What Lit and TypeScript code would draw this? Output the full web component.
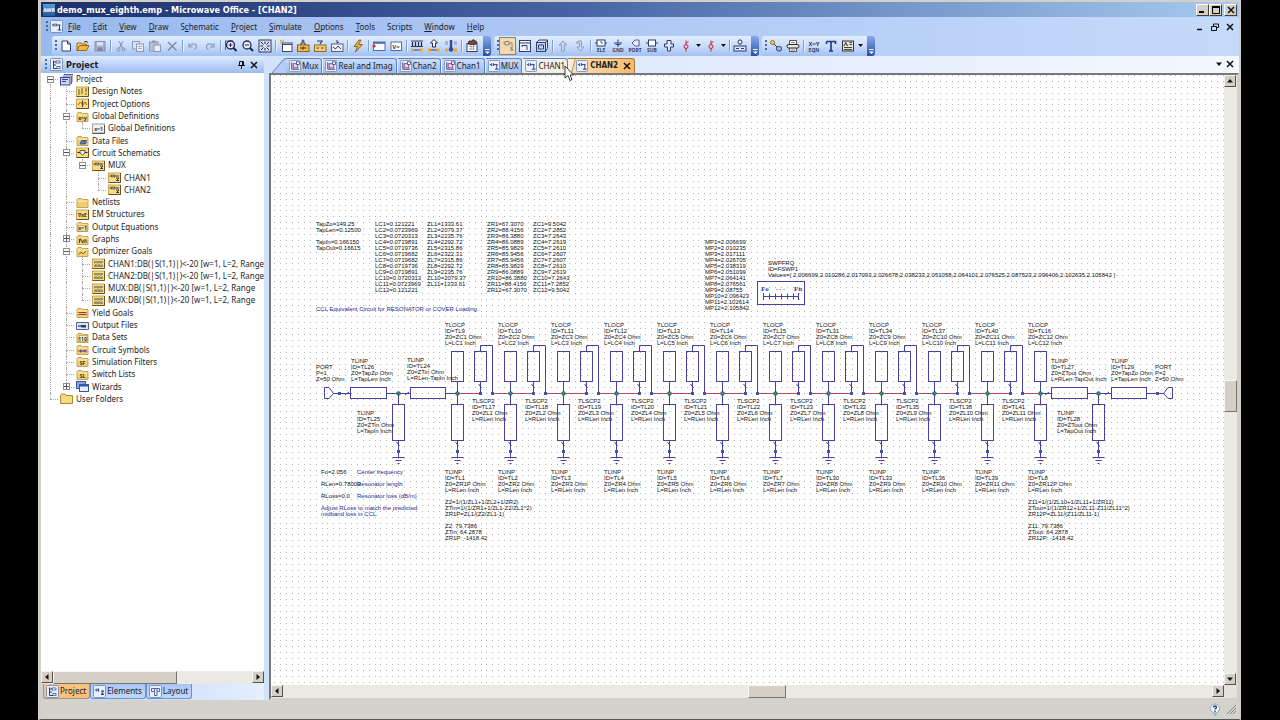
import { LitElement, html, svg, css, nothing } from "lit";
import { customElement, state } from "lit/decorators.js";
import { classMap } from "lit/directives/class-map.js";

/* ---------- icons ---------- */
const INK = "#2b3c78";
const folder = (inner: unknown) => svg`
  <path d="M1 3.5 L2 2.5 H5.5 L6.5 3.5 H12 V11.5 H1 Z" fill="#f3cf72" stroke="#b9923c" stroke-width=".8"/>
  <path d="M1.5 5 H11.5" stroke="#fff0b4"/>${inner}`;
const sheet = (inner: unknown) => svg`
  <rect x=".5" y="2" width="12" height="9.5" fill="#f7dc80" stroke="#b9923c" stroke-width=".8"/>
  <path d="M.5 11.5 H12.5 V2" fill="none" stroke="#6b5420"/>${inner}`;
const frame = (inner: unknown) => svg`
  <rect x=".5" y=".5" width="12" height="12" rx="1" fill="#e9f0fc" stroke="#7b93c4"/>${inner}`;
const tiny = (t: string, y = 10, fill = "#33332a") =>
  svg`<text x="6.5" y=${y} text-anchor="middle" font-size="5" font-weight="700" fill=${fill}>${t}</text>`;
const under = (t: string) => svg`<text x="7" y="14" text-anchor="middle" font-size="5" font-weight="700" fill="#33416e">${t}</text>`;

const ICONS: Record<string, unknown> = {
  /* tree */
  project: svg`<path d="M4 1.5 H13 V9.5 M2.5 3 H11.5 V11" fill="none" stroke="#5a629c"/><rect x=".5" y="4.5" width="9.500" height="7.500" fill="#c9d3f4" stroke="#3c4690"/><path d="M2 6.500 H8 M2 8.500 H6" stroke="#3c4690"/>`,
  notes: sheet(svg`<path d="M3 4 V10 M5 4 H7 M5 6 H7 M5 8 H7 M9 4 H11 M9 6 H11 M9 9 H11" stroke="#6a5a2a"/>`),
  options: sheet(svg`<path d="M2 8 L4.500 5 L7 8 L9 5 L11 8" fill="none" stroke="#c0501e"/><path d="M6.500 3.500 V10" stroke="#533"/>`),
  gdef: folder(tiny("x=y", 10)),
  eqn: svg`<rect x=".5" y="2" width="12" height="9" fill="#f2f2ec" stroke="#99a" /><path d="M.5 11.500 H12.500 V3" fill="none" stroke="#555"/>${tiny("x=1", 8.5)}`,
  data: folder(svg`<path d="M4 10 L5.500 6.500 H10.500 L9.500 10 Z" fill="#5b72b8" stroke="#2e3f86" stroke-width=".7"/>`),
  circuit: sheet(svg`<path d="M1.500 6.500 H4 M9 6.500 H11.500" stroke="#223"/><path d="M4 4.500 H9 V7 L6.500 9 L4 7 Z" fill="#fdf6c9" stroke="#334" stroke-width=".8"/>`),
  sch: sheet(svg`<path d="M1.500 5 H4 M4 3.500 V6.500 M6 3.500 V6.500 M6 5 H11 M8 7 H11 L8.500 9.500 H11" fill="none" stroke="#334"/>`),
  net: folder(nothing),
  em: sheet(tiny("∇xE", 8.5)),
  outeq: folder(svg`<rect x="2" y="5.500" width="9" height="5.500" fill="#fbe7a0" stroke="#884" stroke-width=".5"/>${tiny("x=1", 10)}`),
  graphs: folder(svg`<path d="M3.500 10 V6 H5 V8 H6.500 V10 M8 10 V7 H10 V10" fill="none" stroke="#54401a"/>`),
  goals: folder(svg`<path d="M3 9.500 L5 7 L7 9 L10 6" fill="none" stroke="#7d6120"/>`),
  goal: sheet(svg`<path d="M2 5 H11 M2 9 H11" stroke="#444"/><path d="M2.500 6.500 L4 8 L5.500 6.500 L7 8 L8.500 6.500 L10.500 8" fill="none" stroke="#776" stroke-width=".7"/>`),
  yield: folder(svg`<path d="M2.500 6.500 H10.500 M2.500 8.500 H10.500" stroke="#9b3a26"/>`),
  outf: svg`<path d="M.5 3.500 H12.500 V10.500 H.5 Z" fill="#dfe5f3" stroke="#51619a"/><path d="M2 7 H5" stroke="#223"/><rect x="5" y="6" width="5" height="2.500" fill="#2c3d84"/>`,
  dsets: folder(svg`<rect x="3" y="4.500" width="8" height="6" fill="#fff6c8" stroke="#b98a2c" stroke-width=".6"/>${tiny("110", 9.5)}`),
  sym: folder(svg`<path d="M2 8 H11" stroke="#a33030"/><path d="M4 6 L6.500 8 L4 10 Z M9.500 6 L7 8 L9.500 10 Z" fill="#4a58b0"/>`),
  simf: folder(tiny("SF", 10)),
  swl: folder(tiny("SL", 10)),
  wiz: svg`<rect x=".5" y="1.500" width="9" height="7" fill="#86a7e4" stroke="#3a559c"/><rect x="3.500" y="4.500" width="9" height="7" fill="#e9f0ff" stroke="#3a559c"/><rect x="3.500" y="4.500" width="9" height="2" fill="#2f57b8"/>`,
  users: svg`<path d="M.5 3.500 L1.500 2 H5 L6 3.500 H12.500 V11.500 H.5 Z" fill="#f5db7b" stroke="#a98a34"/>`,
  /* tabs */
  graph: frame(svg`<path d="M3 2.500 V10 H11" fill="none" stroke="${INK}"/><rect x="4.500" y="4" width="5" height="4.500" fill="#f1d3ea" stroke="#8a3f86"/><rect x="8" y="2" width="3.500" height="3" fill="#fff" stroke="${INK}" stroke-width=".8"/>`),
  schem: frame(svg`<path d="M2 5 H4 M4 3.500 V6.500 M6 3.500 V6.500 M6 5 H10.500 M9.500 5 V10 M7.500 10 H11.500" fill="none" stroke="${INK}"/>`),
  pane: frame(svg`<path d="M3.500 2.500 V10.500 H7 M3.500 4 H6 M3.500 7 H6" fill="none" stroke="${INK}"/><rect x="6" y="3" width="4" height="2" fill="#fff" stroke="${INK}" stroke-width=".7"/><rect x="7" y="8.500" width="3" height="2" fill="#fff" stroke="${INK}" stroke-width=".7"/>`),
  elems: frame(svg`<path d="M2 5 H4 M4 3.500 V6.500 M5.500 3.500 V6.500 M8 6 H11 L8.500 8 L11 9.500 H8" fill="none" stroke="${INK}"/>`),
  layout: frame(svg`<path d="M2.500 3.500 H10.500 V6.500 H8 V10.500 H5.500 V6.500 H2.500 Z M5.500 3.500 V6.500 M8 3.500 V6.500" fill="none" stroke="#55669c"/>`),
  /* toolbar, 14x16 */
  new: svg`<path d="M3 3 H8.500 L11.500 6 V13 H3 Z" fill="#fff" stroke="#33406e"/><path d="M8.500 3 V6 H11.500" fill="none" stroke="#33406e"/>`,
  open: svg`<path d="M1 12.500 V5 H5 L6 6 H10.500 V7.500" fill="#f4d06a" stroke="#8d6a20"/><path d="M1 12.500 L3.500 7.500 H13 L10.500 12.500 Z" fill="#f7b440" stroke="#8d6a20"/><path d="M8 4 Q10 2.500 12 4.500" fill="none" stroke="#334"/>`,
  save: svg`<rect x="2" y="3.500" width="10" height="9.500" fill="#a7b2c9" stroke="#8290ae"/><rect x="4" y="4" width="6" height="3.500" fill="#dbe3f2"/><rect x="4.500" y="9.500" width="5" height="3.500" fill="#7f8ba6"/>`,
  cut: svg`<path d="M5 3 L8.500 10 M9 3 L5.500 10" stroke="#7f8ca8"/><circle cx="4.500" cy="11.500" r="1.500" fill="none" stroke="#7f8ca8"/><circle cx="9.500" cy="11.500" r="1.500" fill="none" stroke="#7f8ca8"/>`,
  copy: svg`<rect x="1.500" y="3.500" width="7" height="7.500" fill="#dde6f6" stroke="#8c99b4"/><rect x="5.500" y="6" width="7" height="7.500" fill="#e7eefa" stroke="#8c99b4"/><path d="M7 8.500 H11 M7 10.500 H11" stroke="#a4b0c8"/>`,
  paste: svg`<rect x="1.500" y="4" width="8.500" height="9" fill="#b6c1d8" stroke="#8c99b4"/><rect x="4" y="2.500" width="3.500" height="2.500" fill="#8c99b4"/><rect x="6" y="7" width="6.500" height="6.500" fill="#e7eefa" stroke="#8c99b4"/>`,
  del: svg`<path d="M3 4 L11.500 12.500 M11.500 4 L3 12.500" stroke="#7c88a3" stroke-width="1.400"/>`,
  undo: svg`<path d="M3 5 V9 H7 M3 9 Q6 4.500 9.500 6.500 Q12 9 8.500 11.500" fill="none" stroke="#8c99b8" stroke-width="1.200"/>`,
  redo: svg`<path d="M11 5 V9 H7 M11 9 Q8 4.500 4.500 6.500 Q2 9 5.500 11.500" fill="none" stroke="#8c99b8" stroke-width="1.200"/>`,
  zin: svg`<path d="M1 3 H9 M1.500 3 V12" stroke="#33406e" stroke-width=".8"/><circle cx="6.500" cy="7" r="4" fill="#e5eefc" stroke="#222b55" stroke-width="1.400"/><path d="M4.500 7 H8.500 M6.500 5 V9" stroke="#222b55"/><path d="M9.500 10 L12.500 13" stroke="#1b2242" stroke-width="2"/>`,
  zout: svg`<circle cx="6" cy="7" r="4" fill="#e5eefc" stroke="#222b55" stroke-width="1.300"/><path d="M4 7 H8" stroke="#222b55"/><path d="M9 10 L12 13" stroke="#1b2242" stroke-width="2"/>`,
  fit: svg`<rect x="1" y="2" width="12" height="12" fill="#d5dff2" stroke="#333c5c"/><path d="M3 4 L5.500 6.500 M11 4 L8.500 6.500 M3 12 L5.500 9.500 M11 12 L8.500 9.500 M7 3.500 V6 M7 10 V12.500 M2.500 8 H5 M9 8 H11.500" stroke="#222b4c"/>`,
  nwin: svg`<rect x="3.500" y="5" width="9.500" height="8.500" fill="#fff" stroke="#3a4468"/><path d="M3.500 6.500 H13" stroke="#3a4468"/><path d="M1 2 L4 5 M4 1.500 V4 M1 5 H3" stroke="#c8961e"/>`,
  add1: svg`<rect x="1.500" y="7" width="11.500" height="6.500" fill="#f0bd58" stroke="#8d5a20"/><path d="M5 7 V5 H9 V7 M4 10 H10.500 M7 8.500 V12" fill="none" stroke="#4b3316"/><path d="M7 1.500 V4.500 M5.500 3 H8.500" stroke="#333"/>`,
  add2: svg`<rect x="1.500" y="7" width="11.500" height="6.500" fill="#f5cf70" stroke="#8d6a20"/><path d="M4 3 H9 L7 6 M3.500 10 H6 M8 10 H10.500" fill="none" stroke="#333a5c" stroke-width="1.200"/>`,
  add3: svg`<rect x="1.500" y="6" width="11.500" height="7.500" fill="#eef2fb" stroke="#55608c"/><path d="M3 9 L5.500 11 L8 8 L11 11 M7 2 V5 L9 4" fill="none" stroke="#333a5c"/>`,
  bolt: svg`<path d="M8 2 L3 8.500 H6.500 L4.500 14 L11.500 6.500 H7.500 L10 2 Z" fill="#f5b62c" stroke="#6e4c10" stroke-width=".8"/>`,
  win: svg`<rect x="1.500" y="4" width="11.500" height="8.500" fill="#f6f9ff" stroke="#4d6cae"/><rect x="1.500" y="4" width="11.500" height="1.800" fill="#4d6cae"/><path d="M0 8 H4 M2.500 6.500 V9.500" stroke="#c33"/>`,
  ve: svg`<rect x="2" y="4" width="10.500" height="8.500" fill="#fff" stroke="#4d6cae"/><text x="7" y="11" text-anchor="middle" font-size="6" font-weight="700" fill="#333">V=</text>`,
  bits: svg`<path d="M1 3 H13 M1 8.500 H13" stroke="#2d3a66"/><path d="M2.500 4 V8 M5.500 4 V8 M8.500 4 V8 M11.500 4 V8" stroke="#222b4c" stroke-width="1.200"/><path d="M2 12 H12" stroke="#33478c"/><rect x="1" y="10.500" width="3" height="3" fill="#f0a828"/><rect x="9.500" y="10.500" width="3" height="3" fill="#f0a828"/>`,
  up2: svg`<path d="M7 1.500 L10.500 5 H8.500 V9 H5.500 V5 H3.500 Z" fill="#fff" stroke="#222b4c"/><path d="M2 12 H12" stroke="#33478c"/><rect x="1" y="10.500" width="3" height="3" fill="#f0a828"/><rect x="9.500" y="10.500" width="3" height="3" fill="#f0a828"/>`,
  therm: svg`<path d="M7 2 V10" stroke="#344a9c" stroke-width="2.500"/><circle cx="7" cy="11.500" r="2.300" fill="#344a9c"/><path d="M1 4 H4 M1 6 H4 M10 4 H13 M10 6 H13" stroke="#7a84a4"/><rect x="10" y="10.500" width="3" height="3" fill="#f0a828"/><rect x="1" y="10.500" width="3" height="3" fill="#f0a828"/>`,
  tune: svg`<rect x="2" y="5.500" width="10" height="8" fill="#fff" stroke="#333c5c"/><path d="M3 6 L4 3 H7 L8 1.500 L12 4 L10.500 6.500 H6 Z" fill="#8a4326" stroke="#222" stroke-width=".8"/><path d="M4 8.500 H10 M4 11 H10 M6 7 V12 M8.500 7 V12" stroke="#848eb0" stroke-width=".7"/>`,
  vs: svg`<path d="M2 5 H4 M4 3.500 V7 H8 V3.500 Z M8 5 H11 V12 M9 12 H12.500 M9.500 9 L11 12" fill="none" stroke="#8d8672"/>`,
  vl: svg`<rect x="1.500" y="2.500" width="11" height="11" fill="#eef3ff" stroke="#33406e"/><path d="M1.500 5 H12.500 M4 7.500 H9 V12 M4 7.500 V9" fill="none" stroke="#33406e"/>`,
  v3: svg`<path d="M1.500 4.500 L4 2 H12.500 V10.500 L10 13.500" fill="#dfe8fb" stroke="#33406e"/><path d="M10.500 4.500 L12.500 2" stroke="#33406e"/><rect x="1.500" y="4.500" width="9" height="9" fill="#c3d0f0" stroke="#33406e"/><path d="M3.500 7 H8.500 V11 H3.500 Z" fill="none" stroke="#33406e"/>`,
  hup: svg`<path d="M7 3 L11 7 H8.500 V13 H5.500 V7 H3 Z" fill="#c9d6ee" stroke="#8f9dbf"/>`,
  hdn: svg`<path d="M5 3 H8.500 V9 H11 L7.500 13 L4 9 H6.500 V5 H3 Z" fill="#c9d6ee" stroke="#8f9dbf"/>`,
  ele: svg`<path d="M1 5 H3 M11 5 H13" stroke="${INK}"/><rect x="3" y="2" width="8" height="6" fill="#fff" stroke="${INK}"/><path d="M6 4 H8 V6" fill="none" stroke="${INK}" stroke-width=".8"/>${under("ELE")}`,
  gnd: svg`<path d="M7 1.500 V5 M3 5 H11 M4.500 6.500 H9.500 M6 8 H8" stroke="${INK}"/>${under("GND")}`,
  port: svg`<path d="M11 2 V8 H7 L4 5 L7 2 Z" fill="#e8effc" stroke="${INK}" stroke-width=".8"/>${under("PORT")}`,
  sub: svg`<path d="M1 5 H3.500 M10.500 5 H13" stroke="${INK}"/><rect x="3.500" y="2" width="7" height="6" fill="#fff" stroke="${INK}"/>${under("SUB")}`,
  probe: svg`<path d="M5 2.500 H9 V6 H11.500 V9 H8.500 V13 H5.500 V9 H2.500 V6 H5 Z" fill="#dfe8fb" stroke="${INK}"/>`,
  m1: svg`<path d="M7 2.500 V13.500 M7 5 L9.500 3.500" stroke="#c0263a"/><circle cx="7" cy="8.500" r="2" fill="#e7c6d8" stroke="#c0263a"/>`,
  vars: svg`<path d="M7 1.500 V7" stroke="${INK}"/><circle cx="7" cy="4" r="2" fill="#fff" stroke="${INK}"/><rect x="1" y="8" width="12" height="5" fill="#dce6fb" stroke="${INK}"/><path d="M3 10.500 H6 M8 10.500 H11" stroke="${INK}"/>`,
  link: svg`<circle cx="3.500" cy="4.500" r="2" fill="#f5cf60" stroke="#8d6a20"/><path d="M5 6 L9 10" stroke="#333"/><rect x="7.500" y="8.500" width="5" height="4.500" rx="2" fill="#9fb6ea" stroke="${INK}"/>`,
  print: svg`<path d="M3.500 7 V2.500 H10.500 V7" fill="#fff" stroke="#555"/><path d="M3.500 9 V13.500 H10.500 V9" fill="#eee" stroke="#555"/><rect x="1" y="6.500" width="12" height="3.500" rx="1.700" fill="#e8e8ea" stroke="#222"/><path d="M5 4.500 H9 M5 12 H9" stroke="#889"/>`,
  xy: svg`<text x="7" y="7.500" text-anchor="middle" font-size="6" font-weight="700" fill="#3c4454">X=Y</text><text x="7" y="13.500" text-anchor="middle" font-size="5" font-weight="700" fill="#3c4454">EQN</text>`,
  txt: svg`<path d="M2.500 3.500 H11.500 V6 M2.500 6 V3.500 M7 3.500 V13 M5 13 H9" fill="none" stroke="#20397f" stroke-width="1.600"/>`,
  pic: svg`<rect x="1.500" y="3" width="11" height="10" fill="#e8e4d6" stroke="#333"/><path d="M3 9.500 H11 M3 11.500 H11 M8.500 4.500 H11 M8.500 6.500 H11" stroke="#444"/><path d="M3 8 L4.800 4.500 L6.500 8" fill="none" stroke="#222"/>`,
};
const icon = (name: string, w = 13, h = 13) =>
  html`<svg class="ic" width=${w} height=${h} viewBox="0 0 ${w} ${h}" aria-hidden="true">${ICONS[name]}</svg>`;
const tabIcon = (name: string) =>
  html`<svg class="ic" width="12" height="12" viewBox="0 0 13 13" aria-hidden="true">${ICONS[name]}</svg>`;

/* ---------- schematic sheet ---------- */
const LINE = 6;
const label = (x: number, y: number, lines: string[], cls = "") =>
  svg`${lines.map((t, i) => svg`<text class="lb ${cls}" x=${x} y=${y + 2 + i * LINE}>${t}</text>`)}`;

const series = (p: string, v: string[]) => v.map((s, i) => `${p}${i + 1}=${s}`);
const LC = series("LC", ["0.121221", "0.0723969", "0.0720313", "0.0719891", "0.0719736", "0.0719682", "0.0719682", "0.0719736", "0.0719891", "0.0720313", "0.0723969", "0.121221"]);
const ZL = series("ZL", ["1333.61", "2079.37", "2235.76", "2292.72", "2315.86", "2322.31", "2315.86", "2292.72", "2235.76", "2079.37", "1333.61"]);
const ZR = series("ZR", ["67.3070", "88.4156", "86.3880", "86.0889", "85.9829", "85.9456", "85.9456", "85.9829", "86.0889", "86.3880", "88.4156", "67.3070"]);
const ZC = series("ZC", ["9.5042", "7.2852", "7.2643", "7.2619", "7.2610", "7.2607", "7.2607", "7.2610", "7.2619", "7.2643", "7.2852", "9.5042"]);
const MP = series("MP", ["2.006699", "2.010235", "2.017111", "2.026705", "2.038319", "2.051099", "2.064141", "2.076561", "2.08755", "2.096423", "2.102614", "2.105842"]);
const TOP_ID = [9, 10, 11, 12, 13, 14, 15, 31, 34, 37, 40, 16];
const MID_ID = [17, 18, 19, 20, 21, 22, 23, 32, 35, 38, 41];
const LOW_ID = [1, 2, 3, 4, 5, 6, 7, 30, 33, 36, 39, 8];
const AXIS = 393.5;

const joint = (x: number) => svg`<circle class="joint" cx=${x} cy=${AXIS} r="1.8"/>`;
const pin = (x: number, y: number) => svg`<rect class="pin" x=${x - 1.5} y=${y - 1.5} width="3" height="3"/>`;
const stub = (x: number) => svg`
  <path class="wire" d="M${x} ${AXIS} V404.5 M${x} 440.500 V457.500 M${x - 2} 442 L${x + 1} 446 M${x - 6} 457.500 H${x + 6} M${x - 3} 460.500 H${x + 3}"/>
  <path class="wire" d="M${x - 1} 463.500 H${x + 1}"/>
  <rect class="wire" x=${x - 6} y="404.500" width="12" height="36"/>${pin(x, 451.5)}`;
const column = (i: number) => {
  const x = 457.5 + 53 * i;
  const lx = 445 + 53 * i;
  const z = i === 0 ? "ZR1P" : i === 11 ? "ZR12P" : `ZR${i + 1}`;
  return svg`
    <rect class="wire" x=${x - 6} y="351.5" width="12" height="30"/>
    <path class="wire" d="M${x} 381.5 V${AXIS}"/>
    ${i < 11 ? svg`
      <path class="red" d="M${x} ${AXIS} h23 M${x + 35} ${AXIS} h18"/>
      <rect class="wire" x=${x + 17} y="351.5" width="12" height="30"/>
      <path class="wire" d="M${x + 23} 351.5 V345.500 H${x + 35} V${AXIS} M${x + 23} 381.500 V${AXIS} M${x + 21} 384 l3 4"/>
      ${pin(x + 23, AXIS)}${pin(x + 35, AXIS)}
      ${label(lx + 27, 401, ["TLSCP2", `ID=TL${MID_ID[i]}`, `Z0=ZL${i + 1} Ohm`, "L=RLen Inch"])}` : nothing}
    ${stub(x)}${joint(x)}
    ${label(lx, 325, ["TLOCP", `ID=TL${TOP_ID[i]}`, `Z0=ZC${i + 1} Ohm`, `L=LC${i + 1} Inch`])}
    ${label(lx, 472, ["TLINP", `ID=TL${LOW_ID[i]}`, `Z0=${z} Ohm`, "L=RLen Inch"])}`;
};

@customElement("schematic-sheet")
export class SchematicSheet extends LitElement {
  static styles = css`
    :host { display: block; min-width: 0; overflow: hidden; background: #fff; }
    .sheet { display: block; width: 100%; height: 100%; }
    .lb { font: 6px "Liberation Sans", Arial, sans-serif; fill: #111114; white-space: pre; }
    .blue { fill: #282886; }
    .wire { fill: none; stroke: #4640a0; stroke-width: 1; }
    .red { fill: none; stroke: #b8485c; stroke-width: 1; }
    .joint { fill: #2d9484; stroke: #24605e; stroke-width: 1; }
    .pin { fill: #3c56b4; }
    .fn { font: 700 7px "Liberation Serif", serif; fill: #3c389c; }
  `;
  render() {
    const dots = [];
    for (let r = 0; r < 9; r++)
      for (let c = 0; c < 9; c++)
        dots.push(svg`<rect x=${Math.round((c * 53) / 9)} y=${Math.round((r * 53) / 9)} width="1" height="1"/>`);
    return html`<svg class="sheet" role="img" aria-label="CHAN2 schematic">
      <defs><pattern id="grid" x="27" y="0" width="53" height="53" patternUnits="userSpaceOnUse"><g fill="#b4b4b4">${dots}</g></pattern></defs>
      <rect width="100%" height="100%" fill="url(#grid)"/>
      <g transform="translate(-271 -75)">
        ${label(316, 224, ["TapZo=149.25", "TapLen=0.12500", "", "TapIn=0.166150", "TapOut=0.16615"])}
        ${label(375, 224, LC)}${label(427, 224, ZL)}${label(487, 224, ZR)}${label(533, 224, ZC)}${label(705, 242, MP)}
        ${label(316, 309, ["CCL Equivalent Circuit for RESONATOR or COVER Loading."], "blue")}
        ${label(768, 263, ["SWPFRQ", "ID=FSWP1", "Values={ 2.006699,2.010286,2.017093,2.026678,2.038233,2.051058,2.064101,2.076525,2.087523,2.096406,2.102635,2.105842 }"])}
        <rect class="wire" x="757.5" y="281.5" width="47" height="23"/>
        <path class="wire" d="M763 296.500 H799 M763.500 293 V300 M769.500 294 V299 M775.500 294 V299 M781.500 294 V299 M787.500 294 V299 M793.500 294 V299 M798.500 293 V300"/>
        <text class="fn" x="761" y="291">Fo</text><text class="fn" x="776" y="290">. . .</text><text class="fn" x="794" y="291">Fn</text>

        <path class="wire" d="M324.5 387.5 H329 L333.500 393.500 L329 398.500 H324.500 Z M333.500 ${AXIS} H350.500 M386.500 ${AXIS} H410.500 M445.500 ${AXIS} H457.500 M345 395 L349 392 M405 395 L409 392"/>
        <rect class="wire" x="350.5" y="387.5" width="36" height="11"/><rect class="wire" x="410.500" y="387.500" width="35" height="11"/>
        <path class="wire" d="M1172.5 387.500 H1168 L1163.500 393.500 L1168 398.500 H1172.500 Z M1163.500 ${AXIS} H1146.500 M1111.500 ${AXIS} H1087.500 M1040.500 ${AXIS} H1051.500 M1045 395 L1049 392 M1105 395 L1109 392"/>
        <rect class="wire" x="1051.5" y="387.5" width="36" height="11"/><rect class="wire" x="1111.500" y="387.500" width="35" height="11"/>
        ${pin(339.5, AXIS)}${pin(1157.5, AXIS)}
        ${stub(398.5)}${joint(398.5)}${stub(1098.5)}${joint(1098.5)}
        ${TOP_ID.map((_, i) => column(i))}

        ${label(316, 367, ["PORT", "P=1", "Z=50 Ohm"])}
        ${label(351, 361, ["TLINP", "ID=TL26", "Z0=TapZo Ohm", "L=TapLen Inch"])}
        ${label(407, 360, ["TLINP", "ID=TL24", "Z0=ZTin Ohm", "L=RLen-TapIn Inch"])}
        ${label(357, 413, ["TLINP", "ID=TL25", "Z0=ZTin Ohm", "L=TapIn Inch"])}
        ${label(1051, 361, ["TLINP", "ID=TL27", "Z0=ZTout Ohm", "L=RLen-TapOut Inch"])}
        ${label(1111, 361, ["TLINP", "ID=TL29", "Z0=TapZo Ohm", "L=TapLen Inch"])}
        ${label(1057, 413, ["TLINP", "ID=TL28", "Z0=ZTout Ohm", "L=TapOut Inch"])}
        ${label(1155, 367, ["PORT", "P=2", "Z=50 Ohm"])}

        ${label(321, 472, ["Fo=2.056", "", "RLen=0.78000", "", "RLoss=0.0"])}
        ${label(357, 472, ["Center frequency", "", "Resonator length", "", "Resonator loss (dB/m)"], "blue")}
        ${label(321, 508, ["Adjust RLoss to match the predicted", "midband loss in CCL."], "blue")}
        ${label(445, 502, ["Z2=1/(1/ZL1+1/ZL2+1/ZR2)", "ZTin=1/(1/ZR1+1/ZL1-Z2/ZL1^2)", "ZR1P=ZL1/(Z2/ZL1-1)", "", "Z2: 79.7386", "ZTin: 64.2878", "ZR1P: -1418.42"])}
        ${label(1028, 502, ["Z11=1/(1/ZL10+1/ZL11+1/ZR11)", "ZTout=1/(1/ZR12+1/ZL11-Z11/ZL11^2)", "ZR12P=ZL11/(Z11/ZL11-1)", "", "Z11: 79.7386", "ZTout: 64.2878", "ZR12P: -1418.42"])}
      </g>
    </svg>`;
  }
}

/* ---------- data ---------- */
type Node = [level: number, icon: string, text: string, box?: "+" | "-"];
const TREE: Node[] = [
  [0, "project", "Project", "-"],
  [1, "notes", "Design Notes"],
  [1, "options", "Project Options"],
  [1, "gdef", "Global Definitions", "-"],
  [2, "eqn", "Global Definitions"],
  [1, "data", "Data Files"],
  [1, "circuit", "Circuit Schematics", "-"],
  [2, "sch", "MUX", "-"],
  [3, "sch", "CHAN1"],
  [3, "sch", "CHAN2"],
  [1, "net", "Netlists"],
  [1, "em", "EM Structures"],
  [1, "outeq", "Output Equations"],
  [1, "graphs", "Graphs", "+"],
  [1, "goals", "Optimizer Goals", "-"],
  [2, "goal", "CHAN1:DB(|S(1,1)|)<-20 [w=1, L=2, Range"],
  [2, "goal", "CHAN2:DB(|S(1,1)|)<-20 [w=1, L=2, Range"],
  [2, "goal", "MUX:DB(|S(1,1)|)<-20 [w=1, L=2, Range"],
  [2, "goal", "MUX:DB(|S(1,1)|)<-20 [w=1, L=2, Range"],
  [1, "yield", "Yield Goals"],
  [1, "outf", "Output Files"],
  [1, "dsets", "Data Sets"],
  [1, "sym", "Circuit Symbols"],
  [1, "simf", "Simulation Filters"],
  [1, "swl", "Switch Lists"],
  [1, "wiz", "Wizards", "+"],
  [0, "users", "User Folders"],
];
const hasNext = (i: number, level: number) => {
  for (let k = i + 1; k < TREE.length; k++) {
    if (TREE[k][0] < level) return false;
    if (TREE[k][0] === level) return true;
  }
  return false;
};
const MENUS = ["_File", "_Edit", "_View", "_Draw", "S_chematic", "_Project", "_Simulate", "_Options", "_Tools", "Scripts", "_Window", "_Help"];
const BARS = [
  "new open save | cut copy paste del | undo redo | zin zout fit | nwin add1 add2 add3 | bolt | win ve | bits up2 therm | tune",
  "vs vl v3 | hup hdn | ele gnd port sub probe m1 > m1 > | vars",
  "link print | xy txt pic >",
];
const TABS: [string, string][] = [["graph", "Mux"], ["graph", "Real and Imag"], ["graph", "Chan2"], ["graph", "Chan1"], ["schem", "MUX"], ["schem", "CHAN1"], ["schem", "CHAN2"]];
const cross = html`<svg class="ic" width="8" height="8" viewBox="0 0 8 8"><path d="M1 1 L7 7 M7 1 L1 7" stroke="#111" stroke-width="1.500"/></svg>`;
const tri = (d: string) => html`<svg class="ic" width="8" height="8" viewBox="0 0 8 8"><path d=${d} fill="#111"/></svg>`;
const UP = "M1 5.500 L4 2 L7 5.500 Z", DOWN = "M1 2.500 L4 6 L7 2.500 Z", LEFT = "M5.500 1 L2 4 L5.500 7 Z", RIGHT = "M2.500 1 L6 4 L2.500 7 Z";

@customElement("app-root")
export class AppRoot extends LitElement {
  @state() private active = 6;

  static styles = css`
    :host { display: block; background: #000; height: 100vh; overflow: hidden; font: 8px/12px "Noto Sans", Tahoma, sans-serif; color: #1d1d22; }
    * { box-sizing: border-box; }
    button { font: inherit; color: inherit; background: none; border: 0; padding: 0; margin: 0; }
    .ic { display: block; flex: none; }
    .window { position: relative; height: 100%; margin: 0 39px 0 38px; display: grid; grid-template-rows: 15px 19px 20px minmax(0, 1fr) 19px; border: 2px solid #d4d0c8; border-bottom: 1px solid #555; border-left-width: 3px;
      background: linear-gradient(90deg, #9ab9ee, #c6dafb); }
    .title { display: flex; align-items: center; gap: 2px; padding: 0 2px 0 2px; color: #fff; font: 700 9px/14px "DejaVu Sans Condensed", Tahoma, sans-serif; background: linear-gradient(90deg, #1a2f6b, #4765a6 45%, #a6cbf0); }
    .title h1 { font: inherit; margin: 0; flex: 1; white-space: nowrap; }
    .logo { width: 12px; height: 12px; background: linear-gradient(#5aa0d4, #1c5a98); font-size: 5px; line-height: 12px; text-align: center; }
    .wbtn { width: 13px; height: 12px; display: grid; place-items: center; background: #d4d0c8; border: 1px solid; border-color: #fff #404040 #404040 #fff; }
    .winbtns { display: flex; }
    .winbtns .last { margin-left: 2px; }
    .menu { display: flex; align-items: center; padding-left: 5px; }
    .grip { width: 2px; height: 12px; flex: none; background: repeating-linear-gradient(#4a66a8 0 2px, transparent 2px 4px); }
    .menu .ic { margin: 0 0 0 2px; }
    .menu nav { display: flex; gap: 12px; flex: 1; padding-left: 5px; }
    .mdi { display: flex; gap: 5px; padding-right: 5px; }
    .bars { display: flex; gap: 3px; padding-left: 11px; }
    .bar { display: flex; align-items: center; height: 20px; padding-left: 3px; background: linear-gradient(#e2edff, #c9dcfb 50%, #a3c0f0); border-radius: 3px; }
    .tool { width: 17px; height: 18px; display: grid; place-items: center; }
    .pressed { background: #f5d9b0; border: 1px solid #8f8466; }
    .sep { width: 1px; height: 12px; margin: 0 1px 0 2px; background: #7f9fd8; box-shadow: 1px 0 #e8f1ff; }
    .drop { width: 8px; display: grid; place-items: center; }
    .cap { width: 8px; height: 20px; margin-left: 3px; display: grid; align-items: end; background: linear-gradient(#86abe8, #2c51a4); border-radius: 0 3px 3px 0; }
    .body { display: grid; grid-template-columns: 223px minmax(0, 1fr); gap: 5px; padding: 0; background: #d3e2fb; min-height: 0; }
    .left { display: grid; grid-template-rows: 17px minmax(0, 1fr) 13px 16px; min-width: 0; min-height: 0; }
    .phead { display: flex; align-items: center; gap: 3px; padding: 0 6px 0 4px; background: linear-gradient(#dfeaff, #9dbcf0); font: 700 9px/16px "DejaVu Sans Condensed", Tahoma, sans-serif; }
    .phead h2 { font: inherit; margin: 0; flex: 1; }
    .phead .pins { display: flex; gap: 5px; }
    .treebox { background: #fff; overflow: hidden; }
    .tree { list-style: none; margin: 0; padding: 0 0 0 1px; display: grid; grid-template-rows: repeat(27, 1fr); height: 332px; }
    .row { display: flex; align-items: center; white-space: nowrap; min-height: 0; }
    .row .ic { margin: 0 3px 0 2px; }
    .guide { position: relative; width: 16px; align-self: stretch; flex: none; display: grid; place-items: center; }
    .v::before, .top::before { content: ""; position: absolute; left: 8px; top: 0; bottom: 0; border-left: 1px dotted #a8a8a8; }
    .top::before { bottom: 50%; }
    .start::before { top: 50%; }
    .h::after { content: ""; position: absolute; left: 8px; right: 0; top: 50%; border-top: 1px dotted #a8a8a8; }
    .box { position: relative; z-index: 1; width: 7px; height: 7px; background: #fff; border: 1px solid #8a8f98; display: grid; place-items: center; }
    .box svg { display: block; }
    .hs, .vs { display: flex; background: #ebe9e4; }
    .vs { flex-direction: column; }
    .sb { width: 12px; height: 12px; flex: none; display: grid; place-items: center; background: #d4d0c8; border: 1px solid; border-color: #f4f2ee #55524c #55524c #f4f2ee; }
    .thumb { background: #d4d0c8; border: 1px solid; border-color: #f8f7f4 #77746c #77746c #f8f7f4; }
    .lt { width: 124px; }
    .gap { flex: 1; }
    .btabs { display: flex; padding-left: 2px; background: linear-gradient(90deg, #bdd3f9, #e3eeff); }
    .btab { display: flex; align-items: center; gap: 1px; height: 15px; padding: 0 3px 0 2px; border: 1px solid #6f8fce; border-top: 0; border-radius: 0 0 3px 3px; background: linear-gradient(#a9c5f5, #c3d8fb); }
    .btab.on { background: #fbc27c; border-color: #b98d5c; }
    .right { display: grid; grid-template-rows: 17px minmax(0, 1fr); min-width: 0; min-height: 0; background: linear-gradient(90deg, #d3e2fb, #f4f8ff); }
    .tabs { display: flex; align-items: flex-end; padding: 0 5px 0 3px; min-width: 0; }
    .tab { display: flex; align-items: center; gap: 1px; height: 15px; padding: 0 3px 0 2px; border: 1px solid #5f80c0; border-left-color: #e4eeff; border-bottom: 0; border-radius: 0 3px 0 0; background: linear-gradient(#c9dcfc, #9dbcf0); white-space: nowrap; }
    .tab.first { border-left-color: transparent; }
    .tab.hot { background: #f4efe0; padding-right: 2px; }
    .tab.on { gap: 2px; background: linear-gradient(105deg, #f4efe0 6px, #c08a48 7px, #fde0b4 8px, #fab866); border-color: #a8783c; border-left: 0; padding-left: 8px; font: 700 8px/12px "DejaVu Sans Condensed", Tahoma, sans-serif; }
    .tab.on .ic:last-child { margin-left: 3px; }
    .slant { display: block; margin-right: -1px; }
    .tabtools { display: flex; gap: 3px; margin-left: auto; padding-bottom: 5px; }
    .doc { display: grid; grid-template-columns: minmax(0, 1fr) 13px; grid-template-rows: minmax(0, 1fr) 13px; border: 2px solid #77787c; border-right: 2px solid #d4d0c8; border-bottom: 2px solid #d4d0c8; background: #e4e2dc; min-height: 0; }
    .vthumb { height: 32px; }
    .vb { flex: 300; } .va { flex: 268; }
    .hthumb { width: 38px; } .hb { flex: 463; } .ha { flex: 425; }
    .status { display: flex; align-items: center; justify-content: flex-end; gap: 6px; padding-right: 3px; background: #d4d2cc; }
    .cursor { position: absolute; left: 523px; top: 63px; }
  `;

  private bar(spec: string, first: boolean) {
    let n = 0;
    return html`<div class="bar" role="toolbar"><span class="grip"></span>
      ${spec.split(" ").map((t) =>
        t === "|" ? html`<span class="sep"></span>`
        : t === ">" ? html`<button class="drop" aria-label="More">${html`<svg class="ic" width="5" height="4" viewBox="0 0 5 4"><path d="M0 0 H5 L2.500 3 Z" fill="#111"/></svg>`}</button>`
        : html`<button class=${classMap({ tool: true, pressed: first && n++ === 0 })} aria-label=${t}>${icon(t, 14, 16)}</button>`)}
      <button class="cap" aria-label="Toolbar options"><svg width="8" height="7" viewBox="0 0 8 7"><path d="M2 .5 H6.500" stroke="#fff"/><path d="M2 2.500 H7 L4.500 5 Z" fill="#fff"/></svg></button></div>`;
  }

  private row([level, ic, text, box]: Node, i: number) {
    const cells = [];
    for (let c = 0; c < level; c++) cells.push(html`<span class=${classMap({ guide: true, v: hasNext(i, c) })}></span>`);
    const next = hasNext(i, level);
    cells.push(html`<span class=${classMap({ guide: true, h: true, v: next, top: !next, start: i === 0 })}>${box
      ? html`<button class="box" aria-label=${box === "+" ? "Expand" : "Collapse"}><svg width="5" height="5" viewBox="0 0 5 5"><path d=${box === "+" ? "M0 2.500 H5 M2.500 0 V5" : "M0 2.500 H5"} stroke="#555"/></svg></button>` : nothing}</span>`);
    return html`<li class="row" role="treeitem" aria-level=${level + 1}>${cells}${icon(ic, 13, 13)}<span>${text}</span></li>`;
  }

  render() {
    return html`<div class="window">
      <header class="title"><span class="logo">AWR</span><h1>demo_mux_eighth.emp - Microwave Office - [CHAN2]</h1>
        <div class="winbtns">
          <button class="wbtn" aria-label="Minimize"><svg width="7" height="7" viewBox="0 0 7 7"><path d="M0 6 H5" stroke="#000" stroke-width="2"/></svg></button>
          <button class="wbtn" aria-label="Maximize"><svg width="8" height="8" viewBox="0 0 8 8"><path d="M.5 1 V7.500 H7.500 V1" fill="none" stroke="#000"/><path d="M0 1 H8" stroke="#000" stroke-width="2"/></svg></button>
          <button class="wbtn last" aria-label="Close">${cross}</button>
        </div></header>
      <div class="menu"><span class="grip"></span>${icon("schem")}
        <nav>${MENUS.map((m) => { const [a, b] = m.includes("_") ? m.split("_") : [m, ""]; return html`<button>${a}<u>${b.slice(0, 1)}</u>${b.slice(1)}</button>`; })}</nav>
        <div class="mdi">
          <button aria-label="Minimize document"><svg class="ic" width="8" height="8" viewBox="0 0 8 8"><path d="M1 6.500 H6" stroke="#111" stroke-width="1.500"/></svg></button>
          <button aria-label="Restore document"><svg class="ic" width="8" height="8" viewBox="0 0 8 8"><path d="M2.500 3 V1 H7.500 V4.500 H6 M.5 3.500 H5.500 V7.500 H.5 Z" fill="none" stroke="#111"/></svg></button>
          <button aria-label="Close document">${cross}</button>
        </div></div>
      <div class="bars">${BARS.map((b, i) => this.bar(b, i === 1))}</div>
      <main class="body">
        <section class="left">
          <div class="phead"><span class="grip"></span>${icon("pane")}<h2>Project</h2>
            <div class="pins"><button aria-label="Pin"><svg class="ic" width="7" height="8" viewBox="0 0 7 8"><path d="M1.500 .500 H5.500 V4 M1.500 .500 V4 M0 4.500 H7 M3.500 4.500 V8 M4.500 1 V4" fill="none" stroke="#111"/></svg></button><button aria-label="Close panel">${cross}</button></div></div>
          <div class="treebox"><ul class="tree" role="tree">${TREE.map((n, i) => this.row(n, i))}</ul></div>
          <div class="hs"><button class="sb" aria-label="Scroll left">${tri(LEFT)}</button><span class="thumb lt"></span><span class="gap"></span><button class="sb" aria-label="Scroll right">${tri(RIGHT)}</button></div>
          <div class="btabs"><button class="btab on">${icon("pane")}Project</button><button class="btab">${icon("elems")}Elements</button><button class="btab">${icon("layout")}Layout</button></div>
        </section>
        <section class="right">
          <div class="tabs" role="tablist">
            <svg class="slant" width="15" height="15" viewBox="0 0 15 15"><path d="M0 15 L11 2 Q12 .500 15 .500 V15 Z" fill="#b4cdf6"/><path d="M0 15 L11 2 Q12 .500 15 .500" fill="none" stroke="#5f80c0"/></svg>
            ${TABS.map(([ic, t], i) => html`
              <button role="tab" aria-selected=${i === this.active} class=${classMap({ tab: true, first: i === 0, on: i === this.active, hot: i === 5 })} @click=${() => (this.active = i)}>${tabIcon(ic)}<span>${t}</span>${i === this.active ? cross : nothing}</button>`)}
            <div class="tabtools"><button aria-label="Window list">${tri(DOWN)}</button><button aria-label="Close tab">${cross}</button></div>
          </div>
          <div class="doc">
            <schematic-sheet></schematic-sheet>
            <div class="vs"><button class="sb" aria-label="Scroll up">${tri(UP)}</button><span class="vb"></span><span class="thumb vthumb"></span><span class="va"></span><button class="sb" aria-label="Scroll down">${tri(DOWN)}</button></div>
            <div class="hs"><button class="sb" aria-label="Scroll left">${tri(LEFT)}</button><span class="hb"></span><span class="thumb hthumb"></span><span class="ha"></span><button class="sb" aria-label="Scroll right">${tri(RIGHT)}</button></div>
          </div>
        </section>
      </main>
      <footer class="status"><button aria-label="Help"><svg class="ic" width="12" height="14" viewBox="0 0 12 14"><path d="M6 1 A4.500 4.500 0 1 1 5 10 L6.500 13 L7 9.500" fill="#f4f8ff" stroke="#8fa6c4"/><circle cx="6" cy="5.500" r="4.500" fill="#f4f8ff" stroke="#8fa6c4"/><path d="M4.500 4.500 Q4.500 3 6 3 Q7.500 3 7.500 4.300 Q7.500 5.200 6 6 V6.500 M6 7.500 V9" fill="none" stroke="#22397c" stroke-width="1.300"/></svg></button>
        <svg class="ic" width="9" height="9" viewBox="0 0 9 9"><path d="M0 9 L9 0 M3 9 L9 3 M6 9 L9 6" stroke="#88857c"/></svg></footer>
      <svg class="cursor" width="11" height="17" viewBox="0 0 11 17"><path d="M1 1 V13 L4 10.500 L6 15.500 L8 14.500 L6 10 H9.500 Z" fill="#fff" stroke="#222" stroke-width=".9"/></svg>
    </div>`;
  }
}
